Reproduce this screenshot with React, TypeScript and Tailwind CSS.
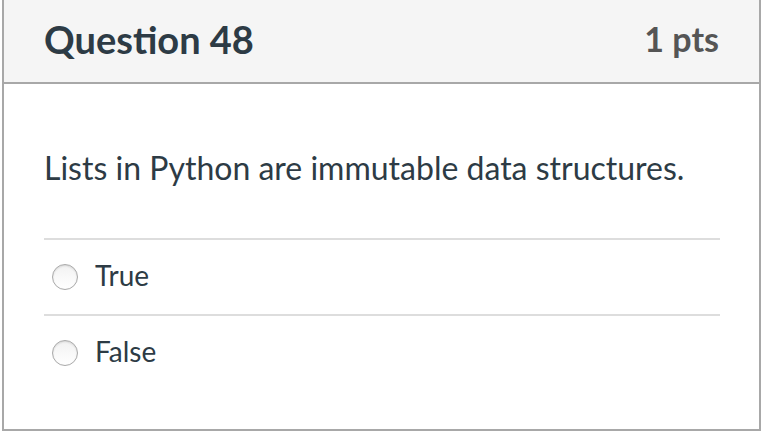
import React from 'react';

const options = ['True', 'False'];

function Radio() {
  return (
    <span className="block w-[26px] h-[26px] shrink-0 rounded-full border border-[#a9a9a9] bg-gradient-to-b from-[#f2f2f2] to-white shadow-[inset_0_1px_2px_rgba(0,0,0,0.12)]" />
  );
}

export default function App() {
  return (
    <div className="w-[772px] h-[446px] bg-white" style={{ fontFamily: 'Lato, "Noto Sans", sans-serif' }}>
      <div className="ml-[2px] w-[759px] h-[431px] border-x-2 border-b-2 border-[#a8a8a8] flex flex-col">
        {/* Header */}
        <div className="h-[84px] shrink-0 bg-[#f5f5f5] border-b-2 border-[#a8a8a8] flex items-center justify-between pl-[40px] pr-[40px] pb-[4px]">
          <h2 className="text-[38px] leading-[44px] font-bold text-[#2d3b45]">Question 48</h2>
          <span className="text-[34px] leading-[44px] font-bold text-[#555]">1 pts</span>
        </div>

        {/* Body */}
        <div className="flex-1 pl-[40px] pr-[39px] pt-[62px]">
          <p className="text-[32px] leading-[44px] text-[#2d3b45]">
            Lists in Python are immutable data structures.
          </p>
          <div className="mt-[48px]">
            {options.map((opt) => (
              <div key={opt} className="border-t-2 border-[#dddddd] h-[76px] flex items-center gap-[17px] pl-[8px]">
                <Radio />
                <span className="text-[28px] leading-[34px] text-[#2d3b45] -mt-[4px]">{opt}</span>
              </div>
            ))}
          </div>
        </div>
      </div>
    </div>
  );
}
